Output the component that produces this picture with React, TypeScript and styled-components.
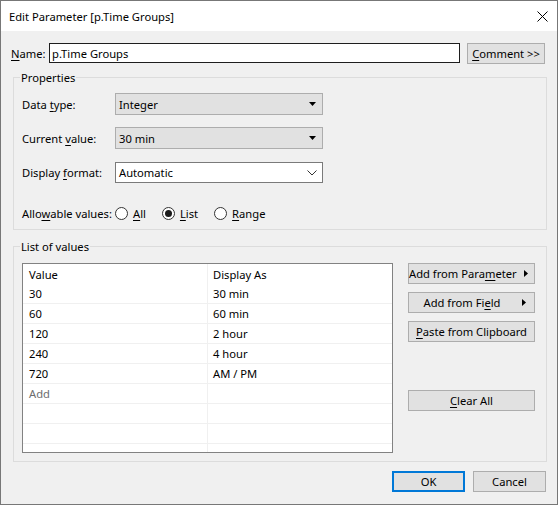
import React from 'react'
import styled, { createGlobalStyle } from 'styled-components'

const GlobalStyle = createGlobalStyle`
  html, body {
    margin: 0;
    padding: 0;
    background: #ffffff;
  }
  body {
    font-family: "Segoe UI", "Noto Sans", sans-serif;
    font-size: 11.2px;
    color: #000;
    white-space: nowrap;
  }
`

const Window = styled.div`
  width: 558px;
  height: 505px;
  box-sizing: border-box;
  border: 1px solid #777777;
  background: #f0f0f0;
  display: flex;
  flex-direction: column;
`

const TitleBar = styled.div`
  height: 30px;
  background: #ffffff;
  display: flex;
  align-items: center;
  justify-content: space-between;
  padding: 0 9px 0 8px;
  font-size: 11.2px;
`

const Body = styled.div`
  flex: 1;
  display: flex;
  flex-direction: column;
  padding: 12px 10px 0 10px;
`

const Key = styled.span`
  text-decoration: underline;
  text-underline-offset: 2px;
`

const NameRow = styled.div`
  display: flex;
  align-items: center;
  height: 20px;
  padding-right: 1px;
`

const NameLabel = styled.div`
  width: 38px;
  flex-shrink: 0;
`

const TextBox = styled.div`
  width: 411px;
  height: 20px;
  box-sizing: border-box;
  border: 1px solid #1e1e1e;
  background: #fff;
  padding-left: 2px;
  display: flex;
  align-items: center;
  margin-right: 7px;
`

const Button = styled.div<{ $w?: number; $primary?: boolean }>`
  width: ${(p) => (p.$w ? `${p.$w}px` : '100%')};
  height: 21px;
  box-sizing: border-box;
  border: ${(p) => (p.$primary ? '2px solid #0078d7' : '1px solid #adadad')};
  background: #e1e1e1;
  display: flex;
  align-items: center;
  justify-content: center;
  flex-shrink: 0;
`

const Group = styled.fieldset<{ $top: number }>`
  margin: ${(p) => p.$top}px 0 0 2px;
  padding: 0;
  border: 1px solid #dcdcdc;
  min-width: 0;
`

const Legend = styled.legend`
  padding: 0 1px;
  margin-left: 6px;
`

const PropsBody = styled.div`
  display: flex;
  flex-direction: column;
  padding: 0 8px 8px 8px;
`

const FieldRow = styled.div<{ $top: number; $h?: number }>`
  display: flex;
  align-items: center;
  height: ${(p) => p.$h ?? 22}px;
  margin-top: ${(p) => p.$top}px;
`

const FieldLabel = styled.div`
  width: 93px;
  flex-shrink: 0;
`

const Combo = styled.div<{ $editable?: boolean }>`
  width: 208px;
  height: 100%;
  box-sizing: border-box;
  border: 1px solid ${(p) => (p.$editable ? '#7a7a7a' : '#adadad')};
  background: ${(p) => (p.$editable ? '#ffffff' : '#e1e1e1')};
  display: flex;
  align-items: center;
  justify-content: space-between;
  padding: 0 5px 0 3px;
`

const Radio = styled.div`
  display: flex;
  align-items: center;
  margin-right: 16px;
  gap: 5px;
`

const RadioCircle = styled.div<{ $checked?: boolean }>`
  width: 13px;
  height: 13px;
  box-sizing: border-box;
  border-radius: 50%;
  border: 1px solid #333333;
  background: #fff;
  display: flex;
  align-items: center;
  justify-content: center;
  &::after {
    content: '';
    display: ${(p) => (p.$checked ? 'block' : 'none')};
    width: 7px;
    height: 7px;
    border-radius: 50%;
    background: #1a1a1a;
  }
`

const ListBody = styled.div`
  display: flex;
  padding: 9px 10px 8px 8px;
`

const Table = styled.div`
  width: 371px;
  height: 190px;
  box-sizing: border-box;
  border: 1px solid #828282;
  background: #fff;
  overflow: hidden;
  flex-shrink: 0;
`

const TableRow = styled.div<{ $header?: boolean }>`
  display: grid;
  grid-template-columns: 185px 1fr;
  height: 20px;
  box-sizing: border-box;
  border-bottom: ${(p) => (p.$header ? 'none' : '1px solid #f0f0f0')};
`

const Cell = styled.div<{ $first?: boolean; $muted?: boolean }>`
  display: flex;
  align-items: center;
  box-sizing: border-box;
  padding-left: ${(p) => (p.$first ? 6 : 5)}px;
  border-right: ${(p) => (p.$first ? '1px solid #f0f0f0' : 'none')};
  color: ${(p) => (p.$muted ? '#6d6d6d' : '#000')};
`

const SideButtons = styled.div`
  display: flex;
  flex-direction: column;
  gap: 8px;
  margin-left: 15px;
  width: 127px;
`

const ButtonText = styled.span`
  flex: 1;
  text-align: center;
`

const ArrowSlot = styled.span`
  width: 19px;
  display: flex;
  padding-left: 7px;
  box-sizing: border-box;
`

const Spacer = styled.div<{ $h: number }>`
  height: ${(p) => p.$h}px;
  flex-shrink: 0;
`

const Footer = styled.div`
  display: flex;
  justify-content: flex-end;
  gap: 8px;
  margin-top: 9px;
  padding-right: 1px;
`

const DownTriangle = () => (
  <svg width="8" height="5" viewBox="0 0 8 5">
    <path d="M0 0 H7 L3.5 4 Z" fill="#000" />
  </svg>
)

const Chevron = () => (
  <svg width="10" height="6" viewBox="0 0 10 6">
    <path d="M0.5 0.5 L5 5 L9.5 0.5" fill="none" stroke="#333" strokeWidth="1" />
  </svg>
)

const RightTriangle = () => (
  <svg width="5" height="8" viewBox="0 0 5 8">
    <path d="M0 0 V7 L4 3.5 Z" fill="#000" />
  </svg>
)

const CloseIcon = () => (
  <svg width="11" height="11" viewBox="0 0 11 11">
    <path d="M0.5 0.5 L10.5 10.5 M10.5 0.5 L0.5 10.5" stroke="#000" strokeWidth="1" />
  </svg>
)

const rows: [string, string][] = [
  ['30', '30 min'],
  ['60', '60 min'],
  ['120', '2 hour'],
  ['240', '4 hour'],
  ['720', 'AM / PM'],
]

export default function App() {
  return (
    <>
      <GlobalStyle />
      <Window>
        <TitleBar>
          <span>Edit Parameter [p.Time Groups]</span>
          <CloseIcon />
        </TitleBar>
        <Body>
          <NameRow>
            <NameLabel>
              <Key>N</Key>ame:
            </NameLabel>
            <TextBox>p.Time Groups</TextBox>
            <Button $w={78}>
              <span>
                <Key>C</Key>omment &gt;&gt;
              </span>
            </Button>
          </NameRow>

          <Group $top={7}>
            <Legend>Properties</Legend>
            <PropsBody>
              <FieldRow $top={8}>
                <FieldLabel>
                  Data <Key>t</Key>ype:
                </FieldLabel>
                <Combo>
                  <span>Integer</span>
                  <DownTriangle />
                </Combo>
              </FieldRow>
              <FieldRow $top={12}>
                <FieldLabel>
                  Current <Key>v</Key>alue:
                </FieldLabel>
                <Combo>
                  <span>30 min</span>
                  <DownTriangle />
                </Combo>
              </FieldRow>
              <FieldRow $top={13} $h={21}>
                <FieldLabel>
                  Display <Key>f</Key>ormat:
                </FieldLabel>
                <Combo $editable>
                  <span>Automatic</span>
                  <Chevron />
                </Combo>
              </FieldRow>
              <FieldRow $top={22} $h={16}>
                <FieldLabel>
                  Allo<Key>w</Key>able values:
                </FieldLabel>
                <Radio>
                  <RadioCircle />
                  <span>
                    <Key>A</Key>ll
                  </span>
                </Radio>
                <Radio>
                  <RadioCircle $checked />
                  <span>
                    <Key>L</Key>ist
                  </span>
                </Radio>
                <Radio>
                  <RadioCircle />
                  <span>
                    <Key>R</Key>ange
                  </span>
                </Radio>
              </FieldRow>
            </PropsBody>
          </Group>

          <Group $top={9}>
            <Legend>List of values</Legend>
            <ListBody>
              <Table>
                <TableRow $header>
                  <Cell $first>Value</Cell>
                  <Cell>Display As</Cell>
                </TableRow>
                {rows.map(([v, d]) => (
                  <TableRow key={v}>
                    <Cell $first>{v}</Cell>
                    <Cell>{d}</Cell>
                  </TableRow>
                ))}
                <TableRow>
                  <Cell $first $muted>
                    Add
                  </Cell>
                  <Cell />
                </TableRow>
                {[0, 1, 2].map((i) => (
                  <TableRow key={i}>
                    <Cell $first />
                    <Cell />
                  </TableRow>
                ))}
              </Table>
              <SideButtons>
                <Button>
                  <ButtonText>
                    Add from Para<Key>m</Key>eter
                  </ButtonText>
                  <ArrowSlot>
                    <RightTriangle />
                  </ArrowSlot>
                </Button>
                <Button>
                  <ButtonText>
                    Add from Fi<Key>e</Key>ld
                  </ButtonText>
                  <ArrowSlot>
                    <RightTriangle />
                  </ArrowSlot>
                </Button>
                <Button>
                  <span>
                    <Key>P</Key>aste from Clipboard
                  </span>
                </Button>
                <Spacer $h={32} />
                <Button>
                  <span>
                    <Key>C</Key>lear All
                  </span>
                </Button>
              </SideButtons>
            </ListBody>
          </Group>

          <Footer>
            <Button $w={73} $primary>
              OK
            </Button>
            <Button $w={73}>Cancel</Button>
          </Footer>
        </Body>
      </Window>
    </>
  )
}
